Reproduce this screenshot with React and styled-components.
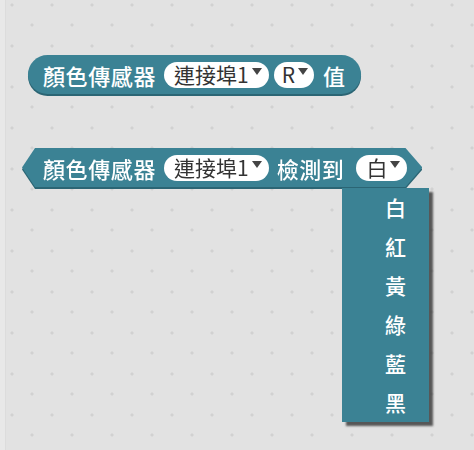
import React from "react";
import styled, { createGlobalStyle } from "styled-components";

const TEAL = "#3b8294";
const TEAL_DARK = "#2b6574";

const GlobalStyle = createGlobalStyle`
  html, body {
    margin: 0;
    padding: 0;
  }
  body {
    background-color: #e2e2e2;
    background-image:
      linear-gradient(to right, #e8e8e8 0 5px, #dcdcdc 5px 6px, transparent 6px),
      radial-gradient(circle at 12px 5px, #d1d1d1 0 1.2px, transparent 1.9px),
      radial-gradient(circle at 32px 25px, #d1d1d1 0 1.2px, transparent 1.9px);
    background-size: 6px 100%, 40px 41px, 40px 41px;
    background-repeat: no-repeat, repeat, repeat;
    font-family: "Noto Sans CJK TC", "Noto Sans CJK SC", sans-serif;
  }
`;

const Canvas = styled.div`
  width: 474px;
  height: 450px;
  overflow: hidden;
  box-sizing: border-box;
  padding: 55px 0 0 28px;
  display: flex;
  flex-direction: column;
  align-items: flex-start;
  gap: 54px;
`;

const ReporterBlock = styled.div`
  display: flex;
  align-items: center;
  gap: 7px;
  height: 39px;
  padding: 0 15px;
  background: ${TEAL};
  border-radius: 20px;
  box-shadow: 0 2px 0 ${TEAL_DARK};
`;

const BooleanWrap = styled.div`
  position: relative;
  margin-left: -6px;
`;

const BooleanShadow = styled.div`
  filter: drop-shadow(0 2px 0 ${TEAL_DARK});
`;

const BooleanBlock = styled.div`
  display: flex;
  align-items: center;
  gap: 8px;
  height: 39px;
  padding: 0 15px 0 21px;
  background: ${TEAL};
  clip-path: polygon(
    13px 0,
    calc(100% - 17px) 0,
    100% 50%,
    calc(100% - 17px) 100%,
    13px 100%,
    0 50%
  );
`;

const Label = styled.span`
  color: #fff;
  font-size: 22px;
  font-weight: 500;
  letter-spacing: 0.6px;
  line-height: 1;
  white-space: nowrap;
  margin-left: ${(p) => p.$pushLeft || 0}px;
`;

const Dropdown = styled.span`
  display: inline-flex;
  align-items: center;
  height: 26px;
  padding: ${(p) => (p.$tight ? "0 6px 0 8px" : "0 7px 0 10px")};
  margin-left: ${(p) => p.$pushLeft || 0}px;
  background: #fff;
  border-radius: 13px;
  color: #333;
  font-size: 21px;
  line-height: 1;
  white-space: nowrap;
`;

const Arrow = styled.span`
  display: inline-block;
  width: 0;
  height: 0;
  margin-left: 3px;
  margin-top: -6px;
  border-left: 5px solid transparent;
  border-right: 5px solid transparent;
  border-top: 7px solid #444;
`;

const Menu = styled.ul`
  position: absolute;
  left: 320px;
  top: 40px;
  z-index: 2;
  width: 87px;
  margin: 0;
  padding: 0;
  list-style: none;
  background: ${TEAL};
  box-shadow: 4px 4px 2px rgba(40, 40, 40, 0.75);
`;

const MenuItem = styled.li`
  height: 39px;
  display: flex;
  align-items: center;
  justify-content: flex-end;
  padding-right: 23px;
  color: #fff;
  font-size: 21px;
  font-weight: 500;
  line-height: 1;
`;

const colours = ["白", "紅", "黃", "綠", "藍", "黑"];

export default function App() {
  return (
    <>
      <GlobalStyle />
      <Canvas>
        <ReporterBlock>
          <Label>顏色傳感器</Label>
          <Dropdown $pushLeft={1}>
            連接埠1<Arrow />
          </Dropdown>
          <Dropdown $tight $pushLeft={-2}>
            R<Arrow />
          </Dropdown>
          <Label $pushLeft={2}>值</Label>
        </ReporterBlock>

        <BooleanWrap>
          <BooleanShadow>
            <BooleanBlock>
              <Label>顏色傳感器</Label>
              <Dropdown>
                連接埠1<Arrow />
              </Dropdown>
              <Label>檢測到</Label>
              <Dropdown $pushLeft={4}>
                白<Arrow />
              </Dropdown>
            </BooleanBlock>
          </BooleanShadow>
          <Menu>
            {colours.map((c) => (
              <MenuItem key={c}>{c}</MenuItem>
            ))}
          </Menu>
        </BooleanWrap>
      </Canvas>
    </>
  );
}
